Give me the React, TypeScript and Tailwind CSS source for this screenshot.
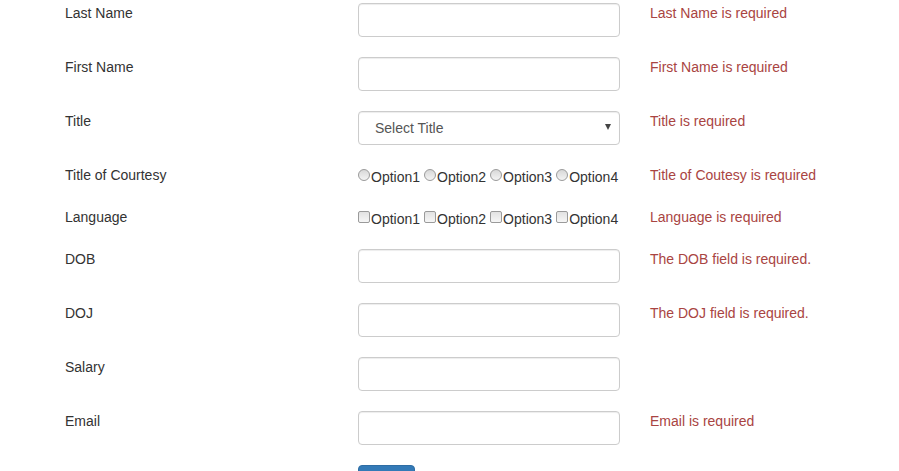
import React from 'react';

const font = { fontFamily: '"Liberation Sans", Arial, sans-serif' };

// Old-style grey radio / checkbox marks
const RadioMark = () => (
  <span className="inline-block w-[12px] h-[12px] mt-[2px] rounded-full border border-[#9a9a9a] bg-gradient-to-b from-[#d8d8d8] to-[#f4f4f4] shrink-0" />
);

const CheckMark = () => (
  <span className="inline-block w-[12px] h-[12px] mt-[2px] rounded-[2px] border border-[#9a9a9a] bg-gradient-to-b from-[#e2e2e2] to-[#f6f6f6] shrink-0" />
);

const TextInput = () => (
  <input
    type="text"
    className="block w-[262px] h-[34px] rounded-[4px] border border-[#ccc] bg-white px-3 text-[14px] text-[#555] shadow-[inset_0_1px_1px_rgba(0,0,0,0.075)] outline-none"
  />
);

const Row = ({ label, error, children, gap = 'mb-[20px]' }: { label: string; error?: string; children: React.ReactNode; gap?: string }) => (
  <div className={`grid grid-cols-[293px_262px_30px_1fr] ${gap}`}>
    <div className="text-[14px] leading-[20px] text-[#333]">{label}</div>
    <div>{children}</div>
    <div />
    <div className="text-[14px] leading-[20px] text-[#a94442]">{error}</div>
  </div>
);

const options = ['Option1', 'Option2', 'Option3', 'Option4'];

const App = () => {
  return (
    <div className="min-h-screen bg-white pl-[65px] pt-[3px]" style={font}>
      <Row label="Last Name" error="Last Name is required">
        <TextInput />
      </Row>
      <Row label="First Name" error="First Name is required">
        <TextInput />
      </Row>
      <Row label="Title" error="Title is required">
        <div className="relative w-[262px] h-[34px] rounded-[4px] border border-[#ccc] bg-white shadow-[inset_0_1px_1px_rgba(0,0,0,0.075)] flex items-center pl-[16px] text-[14px] text-[#555]">
          Select Title
          <span className="absolute right-[8px] top-[12px] w-0 h-0 border-l-[3.5px] border-r-[3.5px] border-t-[6px] border-l-transparent border-r-transparent border-t-[#444]" />
        </div>
      </Row>
      <Row label="Title of Courtesy" error="Title of Coutesy is required">
        <div className="flex items-start pt-[2px] h-[22px] text-[14px] leading-[20px] text-[#333]">
          {options.map((o, i) => (
            <label key={o} className={`flex items-start ${i > 0 ? 'ml-[4px]' : ''}`}>
              <RadioMark />
              <span className="ml-[1px]">{o}</span>
            </label>
          ))}
        </div>
      </Row>
      <Row label="Language" error="Language is required">
        <div className="flex items-start pt-[2px] h-[22px] text-[14px] leading-[20px] text-[#333]">
          {options.map((o, i) => (
            <label key={o} className={`flex items-start ${i > 0 ? 'ml-[4px]' : ''}`}>
              <CheckMark />
              <span className="ml-[1px]">{o}</span>
            </label>
          ))}
        </div>
      </Row>
      <Row label="DOB" error="The DOB field is required.">
        <TextInput />
      </Row>
      <Row label="DOJ" error="The DOJ field is required.">
        <TextInput />
      </Row>
      <Row label="Salary">
        <TextInput />
      </Row>
      <Row label="Email" error="Email is required">
        <TextInput />
      </Row>
      <div className="grid grid-cols-[293px_1fr]">
        <div />
        <div>
          <button className="h-[34px] w-[57px] rounded-[4px] border border-[#2e6da4] bg-[#337ab7] text-[14px] text-white">
            Save
          </button>
        </div>
      </div>
    </div>
  );
};

export default App;
